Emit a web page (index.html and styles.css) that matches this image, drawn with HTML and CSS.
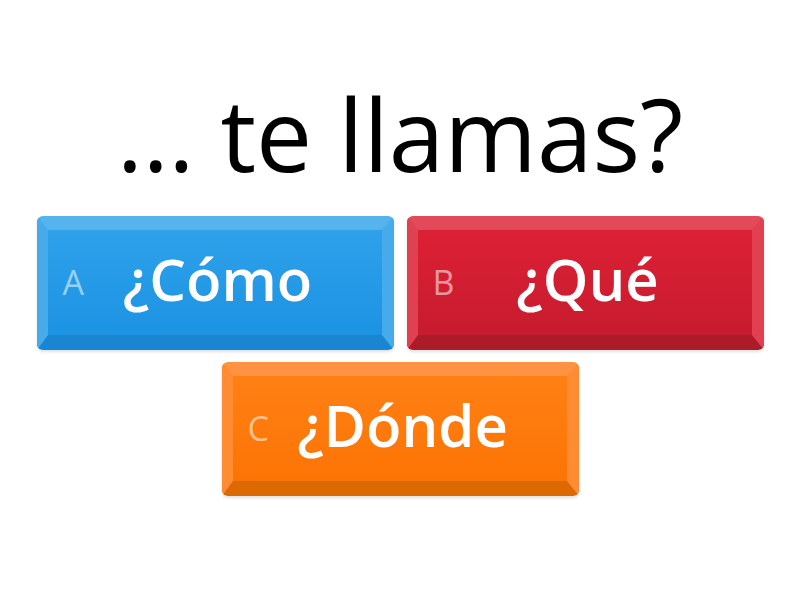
FILE: index.html
```html
<!DOCTYPE html>
<html lang="es">
<head>
<meta charset="utf-8">
<link rel="stylesheet" href="styles.css">
</head>
<body>
<div class="question">… te llamas?</div>
<div class="answers">
  <div class="btn blue"><span class="key">A</span><span class="label">¿Cómo</span></div>
  <div class="btn red"><span class="key">B</span><span class="label">¿Qué</span></div>
  <div class="btn orange"><span class="key">C</span><span class="label">¿Dónde</span></div>
</div>
</body>
</html>
```
FILE: styles.css
```css
html, body {
  margin: 0;
  padding: 0;
  background: #ffffff;
}
body {
  width: 800px;
  height: 600px;
  font-family: "Open Sans", "DejaVu Sans", sans-serif;
  overflow: hidden;
}
.question {
  height: 216px;
  display: flex;
  align-items: center;
  justify-content: center;
  font-size: 100px;
  color: #000;
  line-height: 1;
  box-sizing: border-box;
  padding-top: 50px;
}
.answers {
  width: 728px;
  margin: 0 auto;
  display: flex;
  flex-wrap: wrap;
  justify-content: center;
  gap: 12px 13px;
}
.btn {
  position: relative;
  box-sizing: border-box;
  width: 357px;
  height: 134px;
  border-radius: 6px;
  border-style: solid;
  border-width: 14px 12px 15px 11px;
  display: flex;
  align-items: center;
  justify-content: center;
  box-shadow: 0 2px 3px rgba(0, 0, 0, 0.12);
}
.key {
  position: absolute;
  left: 15px;
  top: 50%;
  transform: translateY(-52%);
  font-size: 34px;
  color: rgba(255, 255, 255, 0.55);
  line-height: 1;
}
.label {
  font-size: 58px;
  font-weight: 600;
  color: #ffffff;
  line-height: 1;
  margin-left: 6px;
  margin-top: -8px;
}
.blue {
  background: linear-gradient(#2ea1ea, #1c93e3);
  border-color: #55b3ee #47abeb #1a86d2 #47abeb;
}
.red {
  background: linear-gradient(#dd2035, #c71b2e);
  border-color: #e24a5a #e0404f #ad1a2a #e0404f;
}
.orange {
  background: linear-gradient(#ff8014, #fc7404);
  border-color: #ff9341 #ff8b33 #dc6902 #ff8b33;
}
```
